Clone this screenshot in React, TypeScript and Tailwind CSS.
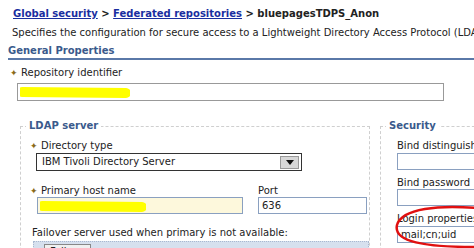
import React from 'react';

const Star: React.FC = () => (
  <span className="inline-block w-[11px] text-[#8a6a1a] text-[9px] leading-none">✦</span>
);

const Scribble: React.FC<{ w: number }> = ({ w }) => (
  <svg className="absolute left-[2px] top-[2px]" width={w} height="13" viewBox={`0 0 ${w} 13`}>
    <path d={`M2 6 L${w - 4} 7`} stroke="#ffff00" strokeWidth="10" strokeLinecap="round" />
  </svg>
);

const App: React.FC = () => {
  return (
    <div className="relative w-[474px] h-[248px] overflow-hidden bg-white text-[10px] leading-[12px] text-[#222]" style={{ fontFamily: '"DejaVu Sans", Verdana, sans-serif' }}>
      {/* breadcrumb */}
      <div className="pt-[8px] pl-[13px] font-bold whitespace-nowrap">
        <span className="text-[#1a2ea0] underline">Global security</span>
        <span> &gt; </span>
        <span className="text-[#1a2ea0] underline">Federated repositories</span>
        <span> &gt; bluepagesTDPS_Anon</span>
      </div>
      <div className="mt-[7px] pl-[12px] whitespace-nowrap">
        Specifies the configuration for secure access to a Lightweight Directory Access Protocol (LDAP) repository
      </div>

      {/* general properties header */}
      <div className="mt-[6px] ml-[8px] pb-[1px] border-b-2 border-[#5a78a8] font-bold text-[#3a5a8c]">
        General Properties
      </div>

      <div className="mt-[7px] ml-[10px] flex items-center">
        <Star />
        <span>Repository identifier</span>
      </div>
      <div className="relative mt-[4px] ml-[17px] w-[427px] h-[18px] border border-[#999] bg-white">
        <Scribble w={110} />
      </div>

      {/* fieldsets */}
      <div className="flex mt-[25px] ml-[20px] gap-[10px]">
        <div className="relative w-[363px] h-[140px] border border-dashed border-[#cfcfcf]">
          <span className="absolute -top-[7px] left-[5px] px-[3px] bg-white font-bold text-[#3a5a8c]">LDAP server</span>

          <div className="mt-[13px] ml-[9px] flex items-center">
            <Star />
            <span>Directory type</span>
          </div>
          <div className="mt-[1px] ml-[15px] w-[266px] h-[18px] border border-[#333] bg-white flex items-center justify-between pl-[5px] pr-[2px]">
            <span>IBM Tivoli Directory Server</span>
            <span className="w-[19px] h-[13px] bg-[#d8d8d8] border border-[#999] flex items-center justify-center">
              <svg width="8" height="5" viewBox="0 0 8 5"><path d="M0 0 L8 0 L4 5 Z" fill="#111" /></svg>
            </span>
          </div>

          <div className="mt-[14px] ml-[9px] flex items-end gap-[15px]">
            <div>
              <div className="flex items-center">
                <Star />
                <span>Primary host name</span>
              </div>
              <div className="relative ml-[7px] w-[206px] h-[17px] border border-[#8aa0c0] bg-[#fdf8dc]">
                <Scribble w={106} />
              </div>
            </div>
            <div>
              <div>Port</div>
              <div className="w-[109px] h-[17px] border border-[#8aa0c0] bg-white pl-[3px] leading-[15px]">636</div>
            </div>
          </div>

          <div className="mt-[13px] ml-[11px] whitespace-nowrap">Failover server used when primary is not available:</div>
          <div className="mt-[2px] ml-[12px] w-[336px] h-[20px] border border-dotted border-[#a8b8d0] bg-[#d6e0ee] pt-[2px] pl-[10px]">
            <span className="inline-block w-[47px] h-[16px] border border-[#888] bg-[#f0f0f0] pl-[5px] leading-[14px]">Failover...</span>
          </div>
        </div>

        <div className="relative w-[100px] h-[140px] border border-dashed border-[#cfcfcf]">
          <span className="absolute -top-[7px] left-[5px] px-[3px] bg-white font-bold text-[#3a5a8c]">Security</span>
          <div className="mt-[13px] ml-[16px] whitespace-nowrap">Bind distinguished name</div>
          <div className="mt-[1px] ml-[16px] w-[120px] h-[17px] border border-[#8aa0c0] bg-white" />
          <div className="mt-[7px] ml-[16px] whitespace-nowrap">Bind password</div>
          <div className="ml-[16px] w-[120px] h-[17px] border border-[#8aa0c0] bg-white" />
          <div className="mt-[7px] ml-[16px] whitespace-nowrap">Login properties</div>
          <div className="mt-[1px] ml-[16px] w-[120px] h-[17px] border border-[#8aa0c0] bg-white pl-[3px] leading-[15px]">mail;cn;uid</div>
        </div>
      </div>

      {/* red annotation ellipse */}
      <svg className="absolute left-[380px] top-[200px]" width="94" height="48" viewBox="0 0 94 48">
        <path d="M96 8 C60 5 22 8 17 25 C13 42 45 47 96 47" fill="none" stroke="#e01010" strokeWidth="2.5" />
      </svg>
    </div>
  );
};

export default App;
